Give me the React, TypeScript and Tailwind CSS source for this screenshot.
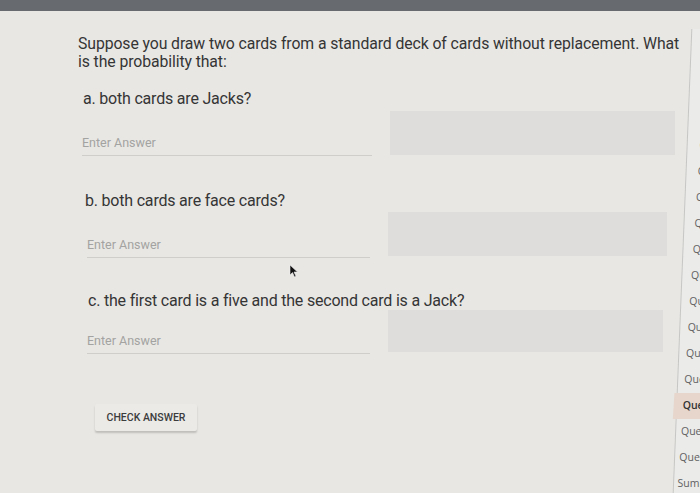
import React from "react";

const items = [
  ...Array.from({ length: 17 }, (_, i) => `Question ${i + 1}`),
  "Summary",
];

export default function App() {
  return (
    <div
      className="relative w-[700px] h-[493px] overflow-hidden bg-[#e8e7e4] flex flex-col text-[#353535]"
      style={{ fontFamily: "Roboto, 'Liberation Sans', sans-serif" }}
    >
      <div className="h-[11px] shrink-0 bg-[#676a6f]" />
      <div className="flex flex-1 min-h-0">
        <main className="w-[690px] shrink-0 pl-[78px] pt-[24px] mr-[-8px]">
          <p className="text-[15.8px] leading-[18px] tracking-[-0.1px] w-[606px]">
            Suppose you draw two cards from a standard deck of cards without replacement. What is the probability that:
          </p>

          <p className="ml-[5px] mt-[18px] text-[16px] leading-[19px] tracking-[-0.2px]">a. both cards are Jacks?</p>
          <div className="mt-[3px]">
            <div className="flex items-end ml-[4px]">
              <div className="w-[290px] border-b border-[#cfcecb] pb-[1px]">
                <span className="text-[12.5px] text-[#a3a3a1] leading-[15px]">Enter Answer</span>
              </div>
              <div className="ml-[18px] w-[285px] h-[44px] bg-[#dedddb] mb-[1px]" />
            </div>
          </div>

          <p className="ml-[7px] mt-[35px] text-[16px] leading-[19px] tracking-[-0.2px]">b. both cards are face cards?</p>
          <div className="mt-[2px]">
            <div className="flex items-end ml-[9px]">
              <div className="w-[283px] border-b border-[#cfcecb] pb-[1px]">
                <span className="text-[12.5px] text-[#a3a3a1] leading-[15px]">Enter Answer</span>
              </div>
              <div className="ml-[18px] w-[279px] h-[44px] bg-[#dedddb] mb-[2px]" />
            </div>
          </div>

          <p className="ml-[10px] mt-[33px] text-[16px] leading-[19px] tracking-[-0.2px]">c. the first card is a five and the second card is a Jack?</p>
          <div className="mt-[0px]">
            <div className="flex items-end ml-[9px]">
              <div className="w-[283px] border-b border-[#cfcecb] pb-[1px]">
                <span className="text-[12.5px] text-[#a3a3a1] leading-[15px]">Enter Answer</span>
              </div>
              <div className="ml-[18px] w-[275px] h-[42px] bg-[#dedddb] mb-[2px]" />
            </div>
          </div>

          <button className="ml-[17px] mt-[50px] w-[102px] h-[27px] bg-[#ebeae7] shadow-[0_2px_2px_rgba(0,0,0,0.18)] rounded-[2px] text-[10.5px] font-medium text-[#3c3c3c]">
            CHECK ANSWER
          </button>
        </main>

        <aside className="relative z-10 w-[60px] shrink-0 mt-[18px] border-l border-[#c6c6c4] bg-[#ebebe9] skew-x-[-2.3deg]">
          <div className="h-full flex flex-col skew-x-[-1.4deg]">
            {items.map((t, i) => (
              <div
                key={t}
                className={
                  i === 14
                    ? "h-[26px] shrink-0 flex items-center pl-[9px] bg-[#e6d6cc] text-[10.5px] font-semibold text-[#333]"
                    : "h-[26px] shrink-0 flex items-center pl-[9px] text-[10.5px] text-[#616161]"
                }
                style={{ fontFamily: "'Open Sans', sans-serif" }}
              >
                <span className="inline-block skew-x-[3.7deg] whitespace-nowrap">{t}</span>
              </div>
            ))}
          </div>
        </aside>
      </div>

      <svg className="absolute left-[289px] top-[264px]" width="10" height="14" viewBox="0 0 10 14">
        <path d="M1 1 L1 11 L3.5 8.6 L5.5 13 L7 12.3 L5 8 L8.5 8 Z" fill="#111" stroke="#eee" strokeWidth="0.6" />
      </svg>
    </div>
  );
}
